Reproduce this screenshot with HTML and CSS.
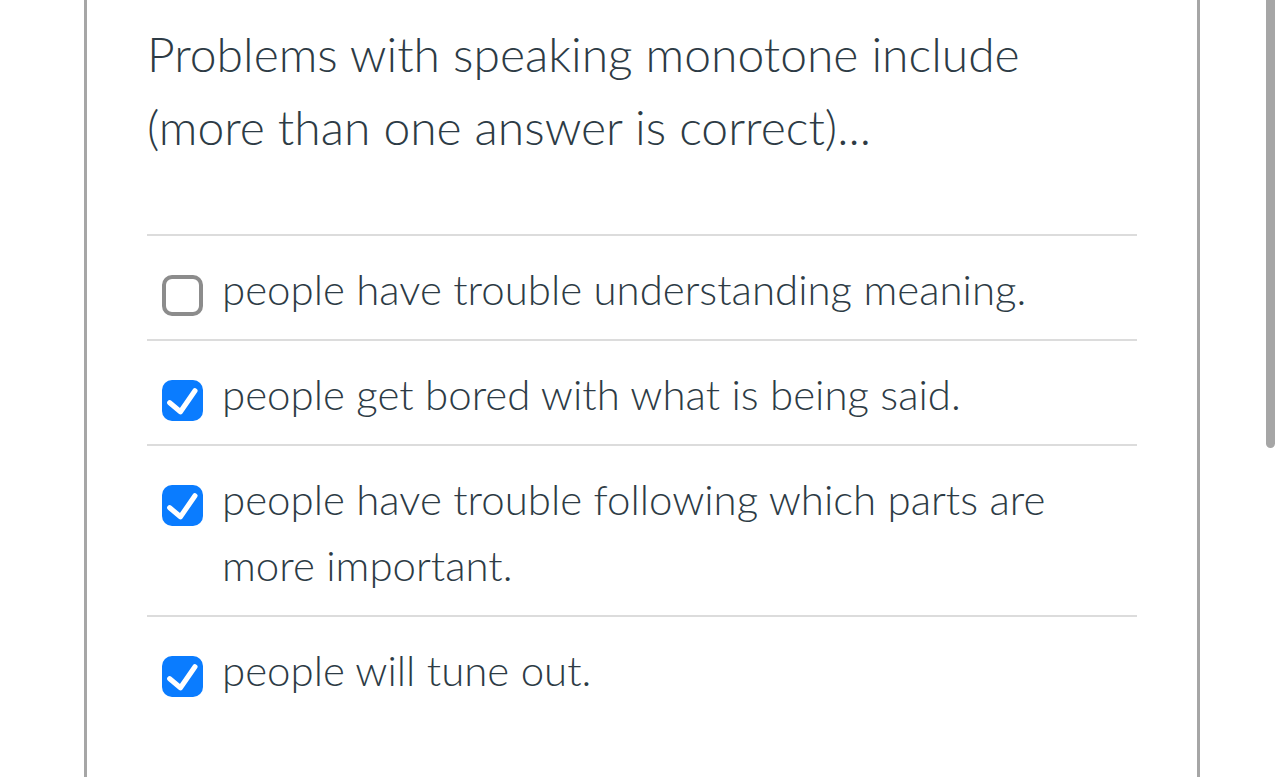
FILE: index.html
```html
<!DOCTYPE html>
<html lang="en">
  <head>
    <meta charset="UTF-8" />
    <meta name="viewport" content="width=device-width, initial-scale=1.0" />
    <link rel="stylesheet" href="styles.css">
    <title>Quiz question</title>
  </head>
  <body>
    <div class="page">
      <div class="question">
        <div class="questionText">
          Problems with speaking monotone include (more than one answer is correct)...
        </div>
        <div class="answers">
          <label class="answer">
            <span class="box"></span>
            <span class="answerText">people have trouble understanding meaning.</span>
          </label>
          <label class="answer">
            <span class="box checked">
              <svg viewBox="0 0 24 24"><path d="M4.5 13.3 L10.8 18.6 L19.3 6.3" /></svg>
            </span>
            <span class="answerText">people get bored with what is being said.</span>
          </label>
          <label class="answer">
            <span class="box checked">
              <svg viewBox="0 0 24 24"><path d="M4.5 13.3 L10.8 18.6 L19.3 6.3" /></svg>
            </span>
            <span class="answerText">people have trouble following which parts are more important.</span>
          </label>
          <label class="answer">
            <span class="box checked">
              <svg viewBox="0 0 24 24"><path d="M4.5 13.3 L10.8 18.6 L19.3 6.3" /></svg>
            </span>
            <span class="answerText">people will tune out.</span>
          </label>
        </div>
      </div>
    </div>
    <div class="scrollbar"></div>
  </body>
</html>
```

FILE: styles.css
```css
html, body {
  margin: 0;
  height: 100%;
  background-color: #fff;
  overflow: hidden;
}

body {
  font-family: Lato, "Open Sans", sans-serif;
  font-weight: 300;
  color: #2d3b45;
}

.page {
  margin-left: 84px;
  width: 1110px;
  min-height: 100%;
  border-left: 3px solid #a6a6a6;
  border-right: 3px solid #a6a6a6;
}

.question {
  padding: 17px 60px 0 60px;
}

.questionText {
  font-size: 48px;
  line-height: 73px;
  padding-right: 60px;
}

.answers {
  margin-top: 71px;
}

.answer {
  display: flex;
  align-items: flex-start;
  border-top: 2px solid #dcdcdc;
  padding: 20px 0 17px 15px;
  font-size: 42px;
  line-height: 66px;
}

.box {
  flex: none;
  box-sizing: border-box;
  width: 41px;
  height: 41px;
  margin-top: 19px;
  margin-right: 19px;
  border: 4px solid #8c8c8c;
  border-radius: 10px;
}

.box.checked {
  border: none;
  background-color: #0a7cff;
}

.box svg {
  display: block;
  width: 41px;
  height: 41px;
}

.box path {
  fill: none;
  stroke: #fff;
  stroke-width: 3;
  stroke-linecap: round;
  stroke-linejoin: round;
}

.answerText {
  padding-right: 60px;
}

.scrollbar {
  position: absolute;
  top: -10px;
  left: 1266px;
  width: 9px;
  height: 458px;
  border-radius: 5px;
  background-color: #a6a6a6;
}
```
